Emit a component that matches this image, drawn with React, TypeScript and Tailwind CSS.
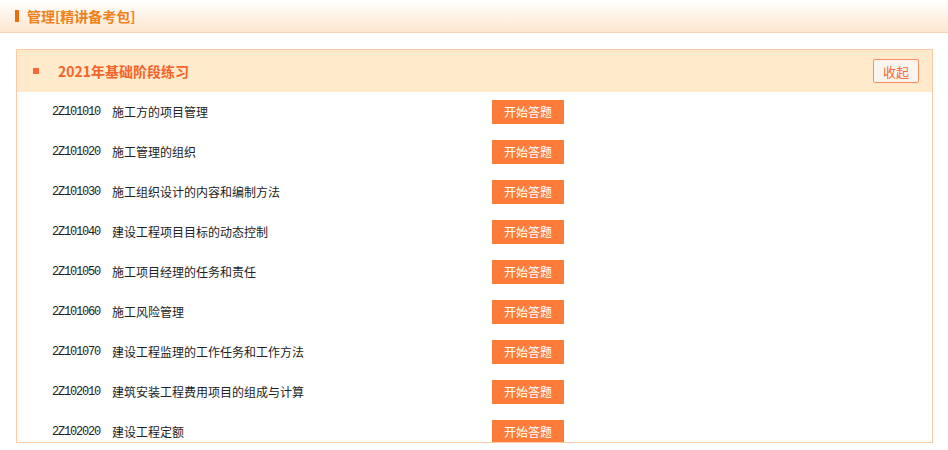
import React from "react";

const items = [
  { code: "2Z101010", name: "施工方的项目管理" },
  { code: "2Z101020", name: "施工管理的组织" },
  { code: "2Z101030", name: "施工组织设计的内容和编制方法" },
  { code: "2Z101040", name: "建设工程项目目标的动态控制" },
  { code: "2Z101050", name: "施工项目经理的任务和责任" },
  { code: "2Z101060", name: "施工风险管理" },
  { code: "2Z101070", name: "建设工程监理的工作任务和工作方法" },
  { code: "2Z102010", name: "建筑安装工程费用项目的组成与计算" },
  { code: "2Z102020", name: "建设工程定额" },
];

const cjk = { fontFamily: '"Microsoft YaHei", "Noto Sans CJK SC", sans-serif' };

const App = () => {
  return (
    <div className="w-[948px] h-[450px] bg-white overflow-hidden" style={cjk}>
      <div className="h-[33px] flex items-center pl-[15px] bg-gradient-to-b from-white to-[#fde6cf] border-b border-[#fbd3ae]">
        <span className="w-[4px] h-[12px] bg-[#e86f0c]" />
        <h2 className="ml-[8px] text-[14px] font-bold text-[#ee8119] leading-none">
          管理[精讲备考包]
        </h2>
      </div>

      <div className="mx-[16px] mt-[16px] w-[917px] h-[394px] border border-[#fbc9a6] overflow-hidden">
        <div className="h-[42px] bg-[#ffebcb] flex items-center pl-[16px] pr-[13px]">
          <span className="w-[6px] h-[6px] bg-[#f56a36]" />
          <h3 className="ml-[19px] text-[14px] font-bold text-[#f5632a]">2021年基础阶段练习</h3>
          <button className="ml-auto w-[46px] h-[24px] border border-[#f98c62] rounded-[2px] bg-[#f8f5ef] text-[#f56a36] text-[13px] leading-none">
            收起
          </button>
        </div>
        <div className="flex flex-col">
          {items.map((it) => (
            <div key={it.code} className="h-[40px] flex items-center shrink-0">
              <span
                className="ml-[35px] w-[60px] text-[12px] text-[#222] tracking-[-1.2px]"
                style={{ fontFamily: '"Liberation Mono", monospace' }}
              >
                {it.code}
              </span>
              <span className="w-[380px] text-[12px] text-[#222]">{it.name}</span>
              <button className="w-[72px] h-[24px] bg-[#ff7b3a] text-white text-[12px] leading-none">
                开始答题
              </button>
            </div>
          ))}
        </div>
      </div>
    </div>
  );
};

export default App;
